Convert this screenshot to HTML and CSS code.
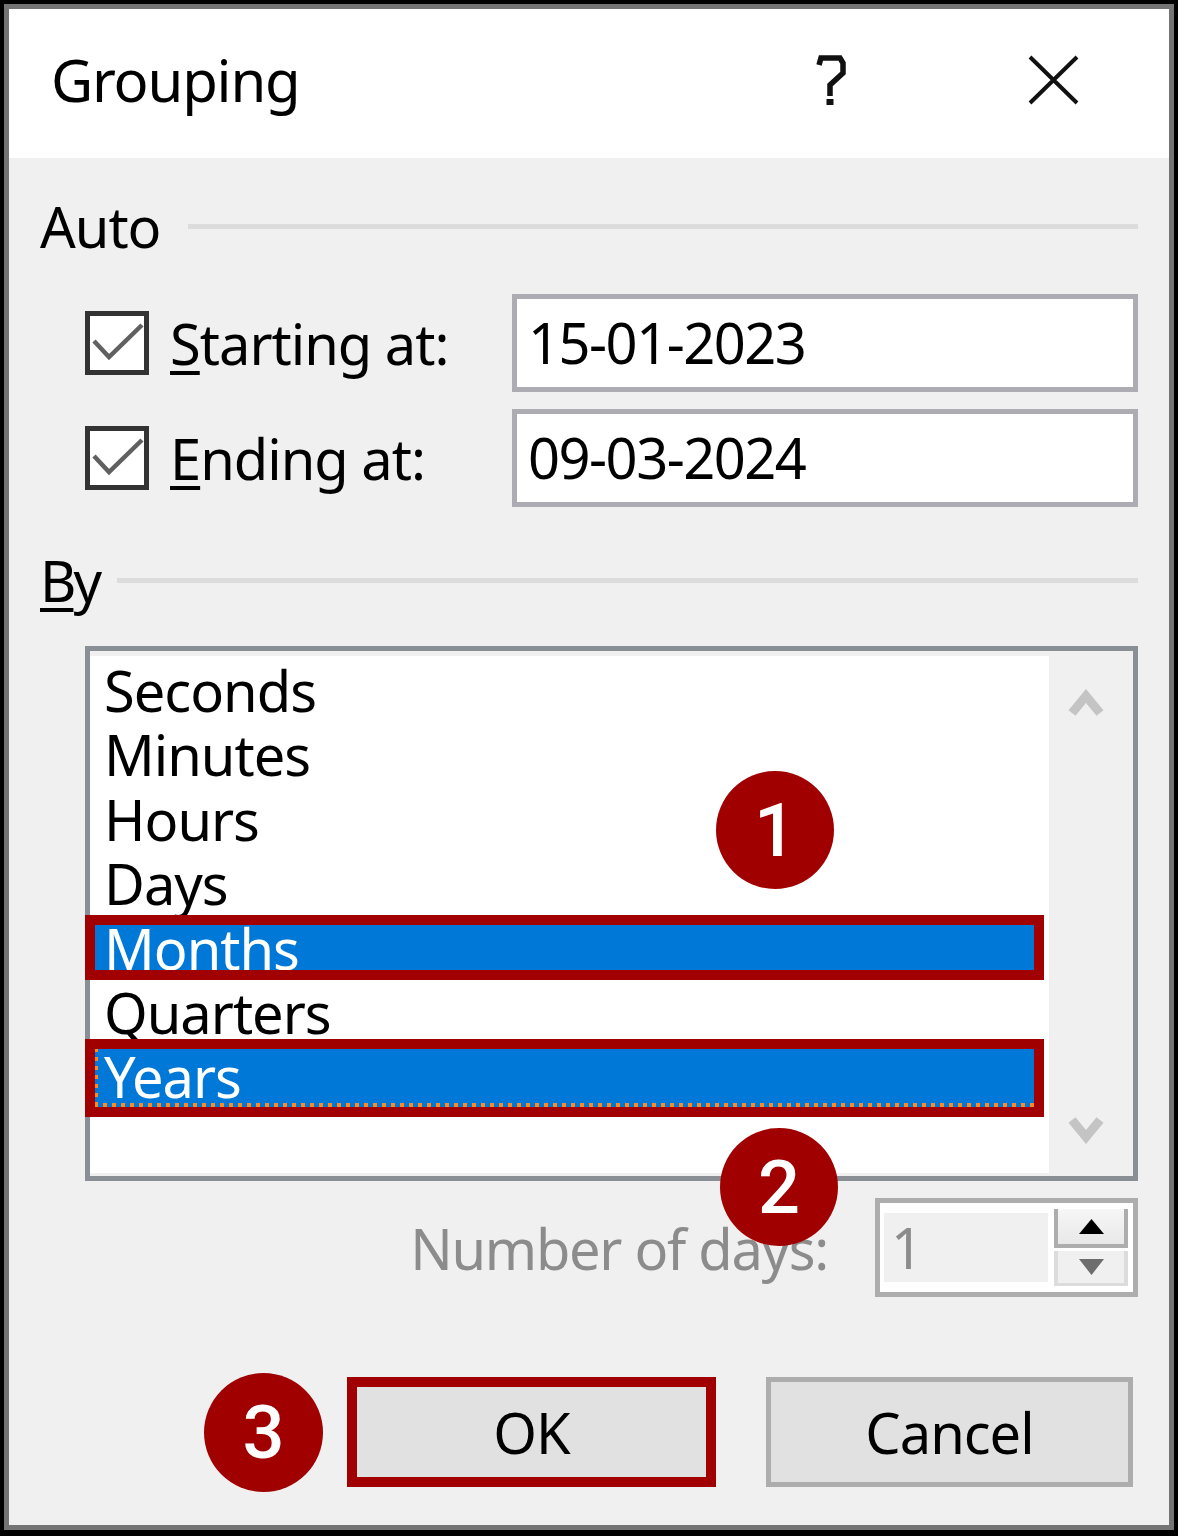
FILE: index.html
```html
<!DOCTYPE html>
<html lang="en">
<head>
  <meta charset="UTF-8">
  <meta name="viewport" content="width=device-width, initial-scale=1.0">
  <title>Grouping</title>
  <link rel="stylesheet" href="styles.css">
</head>
<body>

  <div class="dialog">
    <div class="titlebar">
      <span class="title">Grouping</span>
      <div class="title-buttons">
        <svg class="help-icon" width="30" height="50" viewBox="0 0 30 50">
          <path d="M3 10 L5 3 L24 3 L27 8 L27 18 L14 30 L14 41" fill="none" stroke="#111" stroke-width="5.5"/>
          <rect x="10.5" y="44" width="7" height="6" fill="#111"/>
        </svg>
        <svg class="close-icon" width="51" height="50" viewBox="0 0 51 50">
          <path d="M2 2 L49 48 M49 2 L2 48" stroke="#111" stroke-width="4"/>
        </svg>
      </div>
    </div>

    <div class="content">
      <div class="group-head auto-head">
        <span>Auto</span>
        <div class="rule"></div>
      </div>

      <div class="field-row first-row">
        <span class="checkbox">
          <svg width="54" height="54" viewBox="0 0 54 54"><polyline points="4,25 19,41 52,9" fill="none" stroke="#606060" stroke-width="4.5"/></svg>
        </span>
        <label class="field-label"><u>S</u>tarting at:</label>
        <input class="date-box" type="text" value="15-01-2023" readonly>
      </div>

      <div class="field-row second-row">
        <span class="checkbox">
          <svg width="54" height="54" viewBox="0 0 54 54"><polyline points="4,25 19,41 52,9" fill="none" stroke="#606060" stroke-width="4.5"/></svg>
        </span>
        <label class="field-label"><u>E</u>nding at:</label>
        <input class="date-box" type="text" value="09-03-2024" readonly>
      </div>

      <div class="group-head by-head">
        <span><u>B</u>y</span>
        <div class="rule"></div>
      </div>

      <div class="listbox">
        <ul class="list">
          <li>Seconds</li>
          <li>Minutes</li>
          <li>Hours</li>
          <li>Days</li>
          <li class="sel">Months</li>
          <li>Quarters</li>
          <li class="sel focus">Years</li>
        </ul>
        <div class="scrollbar">
          <svg width="36" height="32" viewBox="0 0 36 32"><polyline points="4,29 18,12 32,29" fill="none" stroke="#c4c4c4" stroke-width="9"/></svg>
          <svg width="36" height="32" viewBox="0 0 36 32"><polyline points="4,3 18,20 32,3" fill="none" stroke="#c4c4c4" stroke-width="9"/></svg>
        </div>

        <!-- annotation marks -->
        <div class="mark mark-months"></div>
        <div class="mark mark-years"></div>
        <div class="badge badge-1">1</div>
        <div class="badge badge-2">2</div>
      </div>

      <div class="days-row">
        <span class="days-label">Number of days:</span>
        <div class="spin">
          <div class="spin-edit">1</div>
          <div class="spin-buttons">
            <div class="spin-up">
              <svg width="25" height="15" viewBox="0 0 25 15"><polygon points="0,15 12.5,0 25,15" fill="#000"/></svg>
            </div>
            <div class="spin-down">
              <svg width="25" height="16" viewBox="0 0 25 16"><polygon points="0,0 25,0 12.5,16" fill="#6d6d6d"/></svg>
            </div>
          </div>
        </div>
      </div>

      <div class="button-row">
        <div class="badge badge-3">3</div>
        <button class="btn btn-ok">OK</button>
        <button class="btn btn-cancel">Cancel</button>
      </div>
    </div>
  </div>

</body>
</html>
```

FILE: styles.css
```css
* {
  box-sizing: border-box;
}

html, body {
  margin: 0;
}

body {
  width: 1178px;
  height: 1536px;
  padding: 4px 4px 6px 4px;
  background-color: #000;
  font-family: 'Noto Sans', 'Open Sans', sans-serif;
  font-size: 56px;
  color: #000;
  overflow: hidden;
}

.dialog {
  height: 100%;
  border: 5px solid #747474;
  background-color: #f0f0f0;
  display: flex;
  flex-direction: column;
}

/* title bar */
.titlebar {
  flex: none;
  height: 149px;
  background-color: #fff;
  display: flex;
  align-items: center;
  padding: 0 90px 8px 42px;
}

.title {
  font-size: 58px;
  line-height: 60px;
  letter-spacing: -1.2px;
}

.title-buttons {
  margin-left: auto;
  display: flex;
  align-items: center;
  gap: 182px;
}

.title-buttons svg {
  display: block;
}

/* body */
.content {
  flex: 1;
  display: flex;
  flex-direction: column;
  padding: 0 31px;
}

.group-head {
  display: flex;
  align-items: center;
  height: 64px;
  gap: 27px;
  letter-spacing: -1px;
}

.group-head .rule {
  flex: 1;
  height: 5px;
  background-color: #dcdcdc;
}

.auto-head {
  margin-top: 36px;
}

.by-head {
  margin-top: 41px;
  gap: 18px;
}

.by-head span {
  letter-spacing: -3px;
}

u {
  text-decoration-thickness: 4px;
  text-underline-offset: 6px;
}

.field-row {
  display: flex;
  align-items: center;
  height: 98px;
  margin-left: 45px;
}

.first-row {
  margin-top: 36px;
}

.second-row {
  margin-top: 17px;
}

.checkbox {
  width: 64px;
  height: 64px;
  border: 5px solid #333;
  background-color: #fff;
  display: flex;
  align-items: center;
  justify-content: center;
}

.checkbox svg {
  display: block;
}

.field-label {
  margin-left: 21px;
  letter-spacing: -1px;
}

.date-box {
  margin-left: auto;
  width: 626px;
  height: 98px;
  border: 5px solid #acacb2;
  background-color: #fff;
  padding: 0 0 3px 11px;
  font: inherit;
  letter-spacing: -1.5px;
  color: #000;
  outline: none;
}

/* list */
.listbox {
  position: relative;
  margin: 34px 0 0 45px;
  height: 535px;
  border: 5px solid #8a8f96;
  background-color: #f0f0f0;
  padding: 5px 0 3px 0;
  display: flex;
}

.list {
  flex: 1;
  margin: 0;
  padding: 2px 10px 0 0;
  list-style: none;
  background-color: #fff;
}

.list li {
  position: relative;
  height: 64.4px;
  line-height: 64.4px;
  padding-left: 14px;
  letter-spacing: -1px;
}

.list li.sel {
  background-color: #0078d7;
  color: #fff;
}

.list li.focus::before {
  content: '';
  position: absolute;
  left: 4px;
  top: 4px;
  bottom: 2px;
  width: 4px;
  background: repeating-linear-gradient(to bottom, #ff8a1f 0 4px, transparent 4px 9px);
}

.list li.focus::after {
  content: '';
  position: absolute;
  left: 4px;
  right: 4px;
  bottom: 2px;
  height: 4px;
  background: repeating-linear-gradient(to right, #ff8a1f 0 4px, transparent 4px 9px);
}

.scrollbar {
  flex: none;
  width: 84px;
  display: flex;
  flex-direction: column;
  justify-content: space-between;
  padding: 28px 0 24px 19px;
}

.scrollbar svg {
  display: block;
}

.mark {
  position: absolute;
  left: -5px;
  width: 959px;
  border: 10px solid #a00000;
}

.mark-months {
  top: 264px;
  height: 65px;
}

.mark-years {
  top: 388px;
  height: 78px;
}

.badge {
  width: 118px;
  height: 118px;
  border-radius: 50%;
  background-color: #a00000;
  color: #fff;
  font-family: Roboto, 'Liberation Sans', sans-serif;
  font-weight: 500;
  font-size: 74px;
  display: flex;
  align-items: center;
  justify-content: center;
}

.badge-1 {
  position: absolute;
  left: 626px;
  top: 120px;
}

.badge-2 {
  position: absolute;
  left: 630px;
  top: 477px;
}

/* number of days */
.days-row {
  margin-top: 17px;
  height: 99px;
  display: flex;
  align-items: center;
  justify-content: flex-end;
}

.days-label {
  margin-right: 47px;
  color: #8c8c8c;
  letter-spacing: -1.3px;
}

.spin {
  width: 263px;
  height: 99px;
  border: 5px solid #adadad;
  background-color: #fff;
  padding: 0 5px 0 4px;
  display: flex;
  align-items: center;
}

.spin-edit {
  width: 164px;
  height: 69px;
  line-height: 69px;
  padding-left: 7px;
  background-color: #f0f0f0;
  color: #8c8c8c;
}

.spin-buttons {
  margin-left: 6px;
  width: 74px;
  height: 77px;
  display: flex;
  flex-direction: column;
  gap: 3px;
}

.spin-buttons svg {
  display: block;
}

.spin-up {
  height: 39px;
  border: solid #adadad;
  border-width: 0 4px 4px 4px;
  background: linear-gradient(#f6f6f6, #e8e8e8);
  display: flex;
  align-items: center;
  justify-content: center;
}

.spin-down {
  height: 35px;
  border: solid #dcdcdc;
  border-width: 0 4px 3px 4px;
  background-color: #f0f0f0;
  display: flex;
  align-items: center;
  justify-content: center;
}

/* buttons */
.button-row {
  margin-top: 80px;
  height: 110px;
  display: flex;
  align-items: center;
  justify-content: flex-end;
  padding-right: 5px;
}

.badge-3 {
  width: 119px;
  height: 119px;
  margin-right: 24px;
}

.btn {
  height: 110px;
  background-color: #e1e1e1;
  font: inherit;
  color: #000;
  letter-spacing: -1px;
  padding: 0;
  cursor: pointer;
}

.btn-ok {
  width: 369px;
  border: 10px solid #a00000;
}

.btn-cancel {
  width: 367px;
  margin-left: 50px;
  border: 5px solid #adadad;
}
```
